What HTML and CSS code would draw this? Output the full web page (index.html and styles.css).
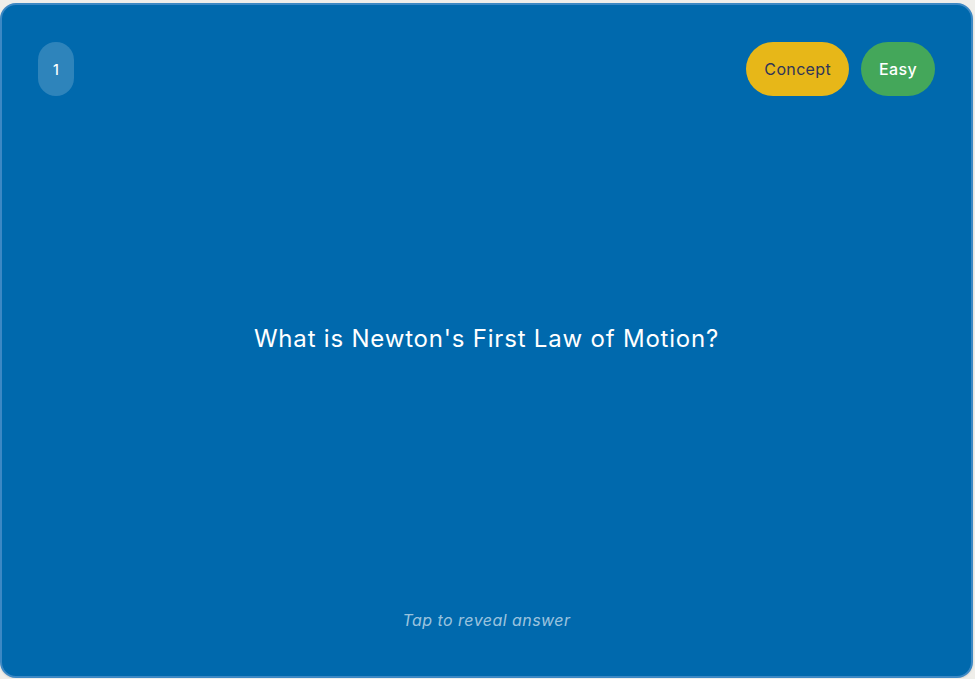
FILE: index.html
```html
<!DOCTYPE html>
<html>
<head>
<meta charset="utf-8">
<link rel="stylesheet" href="styles.css">
</head>
<body>
<div class="card">
  <div class="card-head">
    <span class="num">1</span>
    <div class="tags">
      <span class="tag tag-concept">Concept</span>
      <span class="tag tag-easy">Easy</span>
    </div>
  </div>
  <div class="card-body">
    <p class="question">What is Newton's First Law of Motion?</p>
  </div>
  <div class="card-foot">Tap to reveal answer</div>
</div>
</body>
</html>
```
FILE: styles.css
```css
html, body {
  margin: 0;
  padding: 0;
  background: #efeeea;
}
body {
  padding: 3px 2px 0 0;
  font-family: "Inter", "Noto Sans", sans-serif;
}
.card {
  box-sizing: border-box;
  height: 675px;
  background: #0069ad;
  border: 2px solid #3c88c4;
  border-radius: 16px;
  padding: 37px 36px 36px 36px;
  display: flex;
  flex-direction: column;
  color: #fff;
  box-shadow: 0 1px 2px rgba(0,0,0,0.12);
}
.card-head {
  display: flex;
  justify-content: space-between;
  align-items: flex-start;
}
.num {
  width: 36px;
  height: 54px;
  border-radius: 18px;
  background: rgba(255,255,255,0.18);
  display: flex;
  align-items: center;
  justify-content: center;
  font-size: 14px;
  font-weight: 500;
}
.tags {
  display: flex;
  gap: 12px;
}
.tag {
  height: 54px;
  border-radius: 27px;
  padding: 0 18px;
  display: flex;
  align-items: center;
  font-size: 16px;
  letter-spacing: 0.35px;
}
.tag-concept {
  background: #e7b718;
  color: #2f3559;
}
.tag-easy {
  background: #44a75a;
  color: #fff;
  font-weight: 500;
}
.card-body {
  flex: 1;
  display: flex;
  align-items: center;
  justify-content: center;
  padding-bottom: 30px;
}
.question {
  margin: 0;
  font-size: 24px;
  font-weight: 400;
  letter-spacing: 0.8px;
}
.card-foot {
  text-align: center;
  font-style: italic;
  font-size: 16px;
  letter-spacing: 0.45px;
  color: rgba(255,255,255,0.62);
  padding-bottom: 10px;
}
```
